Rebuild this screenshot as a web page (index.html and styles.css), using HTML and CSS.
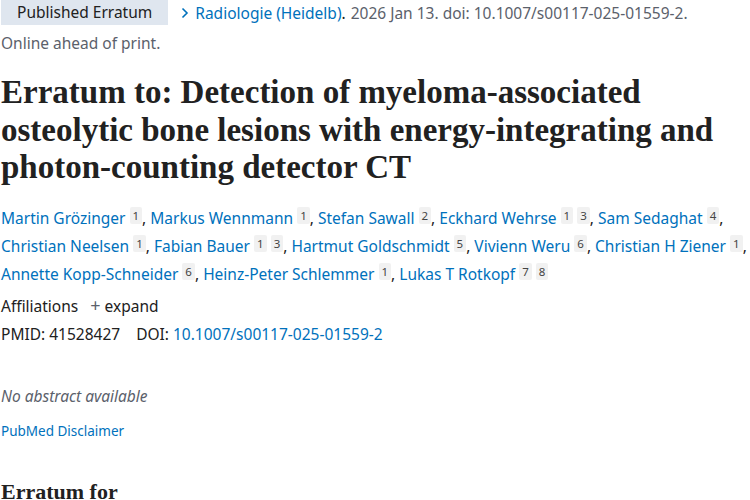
FILE: index.html
```html
<!DOCTYPE html>
<html lang="en">
<head>
  <meta charset="UTF-8" />
  <meta name="viewport" content="width=device-width, initial-scale=1.0"/>
  <title>Erratum – PubMed</title>
  <link rel="stylesheet" href="styles.css">
</head>
<body>
  <main class="article">
    <div class="citation">
      <span class="pub-type">Published Erratum</span>
      <span class="journal">
        <svg class="chevron" width="10" height="12" viewBox="0 0 10 12"><path d="M2.5 1.5 L7 6 L2.5 10.5" fill="none" stroke="#0071bc" stroke-width="1.6"/></svg>
        <span><a href="#">Radiologie (Heidelb)</a>.</span>
      </span>
      <span class="cit">2026 Jan 13. doi: 10.1007/s00117-025-01559-2.</span>
    </div>
    <div class="ahead">Online ahead of print.</div>

    <h1 class="heading-title">Erratum to: Detection of myeloma-associated osteolytic bone lesions with energy-integrating and photon-counting detector CT</h1>

    <div class="authors">
      <a href="#">Martin Grözinger</a> <sup>1</sup>,
      <a href="#">Markus Wennmann</a> <sup>1</sup>,
      <a href="#">Stefan Sawall</a> <sup>2</sup>,
      <a href="#">Eckhard Wehrse</a> <sup>1</sup> <sup>3</sup>,
      <a href="#">Sam Sedaghat</a> <sup>4</sup>,
      <a href="#">Christian Neelsen</a> <sup>1</sup>,
      <a href="#">Fabian Bauer</a> <sup>1</sup> <sup>3</sup>,
      <a href="#">Hartmut Goldschmidt</a> <sup>5</sup>,
      <a href="#">Vivienn Weru</a> <sup>6</sup>,
      <a href="#">Christian H Ziener</a> <sup>1</sup>,
      <a href="#">Annette Kopp-Schneider</a> <sup>6</sup>,
      <a href="#">Heinz-Peter Schlemmer</a> <sup>1</sup>,
      <a href="#">Lukas T Rotkopf</a> <sup>7</sup> <sup>8</sup>
    </div>

    <div class="affiliations">
      Affiliations
      <span class="expand"><span class="plus">+</span> expand</span>
    </div>
    <div class="ids">
      <span>PMID: 41528427</span>
      <span>DOI: <a href="#">10.1007/s00117-025-01559-2</a></span>
    </div>

    <p class="empty-abstract">No abstract available</p>
    <a class="disclaimer" href="#">PubMed Disclaimer</a>

    <h2 class="section-title">Erratum for</h2>
  </main>
</body>
</html>
```

FILE: styles.css
```css
body {
  margin: 0;
  font-family: "Noto Sans", sans-serif;
  font-size: 15.5px;
  color: #212121;
  background: #fff;
}
a {
  color: #0071bc;
  text-decoration: none;
}
.article {
  padding: 0 0 0 1px;
}
.citation {
  display: flex;
  align-items: center;
  height: 25px;
}
.pub-type {
  background: #dfe6ef;
  height: 25px;
  line-height: 25px;
  padding: 0 16px;
  margin-right: 12px;
}
.journal {
  display: flex;
  align-items: center;
  gap: 5px;
  margin-right: 5px;
}
.cit {
  color: #5b616b;
}
.ahead {
  color: #5b616b;
  margin-top: 6px;
  line-height: 24px;
}
.heading-title {
  font-family: "Liberation Serif", serif;
  font-size: 33px;
  line-height: 37.5px;
  font-weight: bold;
  margin: 19px 0 16px;
  color: #212121;
}
.authors {
  line-height: 25px;
}
.authors sup {
  font-size: 11.5px;
  vertical-align: 4px;
  background: #f1f1f1;
  color: #444;
  padding: 1px 3px;
  border-radius: 2px;
}
.affiliations {
  margin-top: 6px;
  line-height: 24px;
}
.expand {
  margin-left: 8px;
}
.plus {
  font-size: 18px;
  color: #5b616b;
}
.ids {
  display: flex;
  gap: 16px;
  line-height: 24px;
  margin-top: 4px;
}
.empty-abstract {
  font-style: italic;
  color: #5b616b;
  margin: 38px 0 0;
  line-height: 24px;
}
.disclaimer {
  display: block;
  font-size: 13.5px;
  margin-top: 14px;
}
.section-title {
  font-family: "Liberation Serif", serif;
  font-size: 22px;
  margin: 39px 0 0;
}
```
